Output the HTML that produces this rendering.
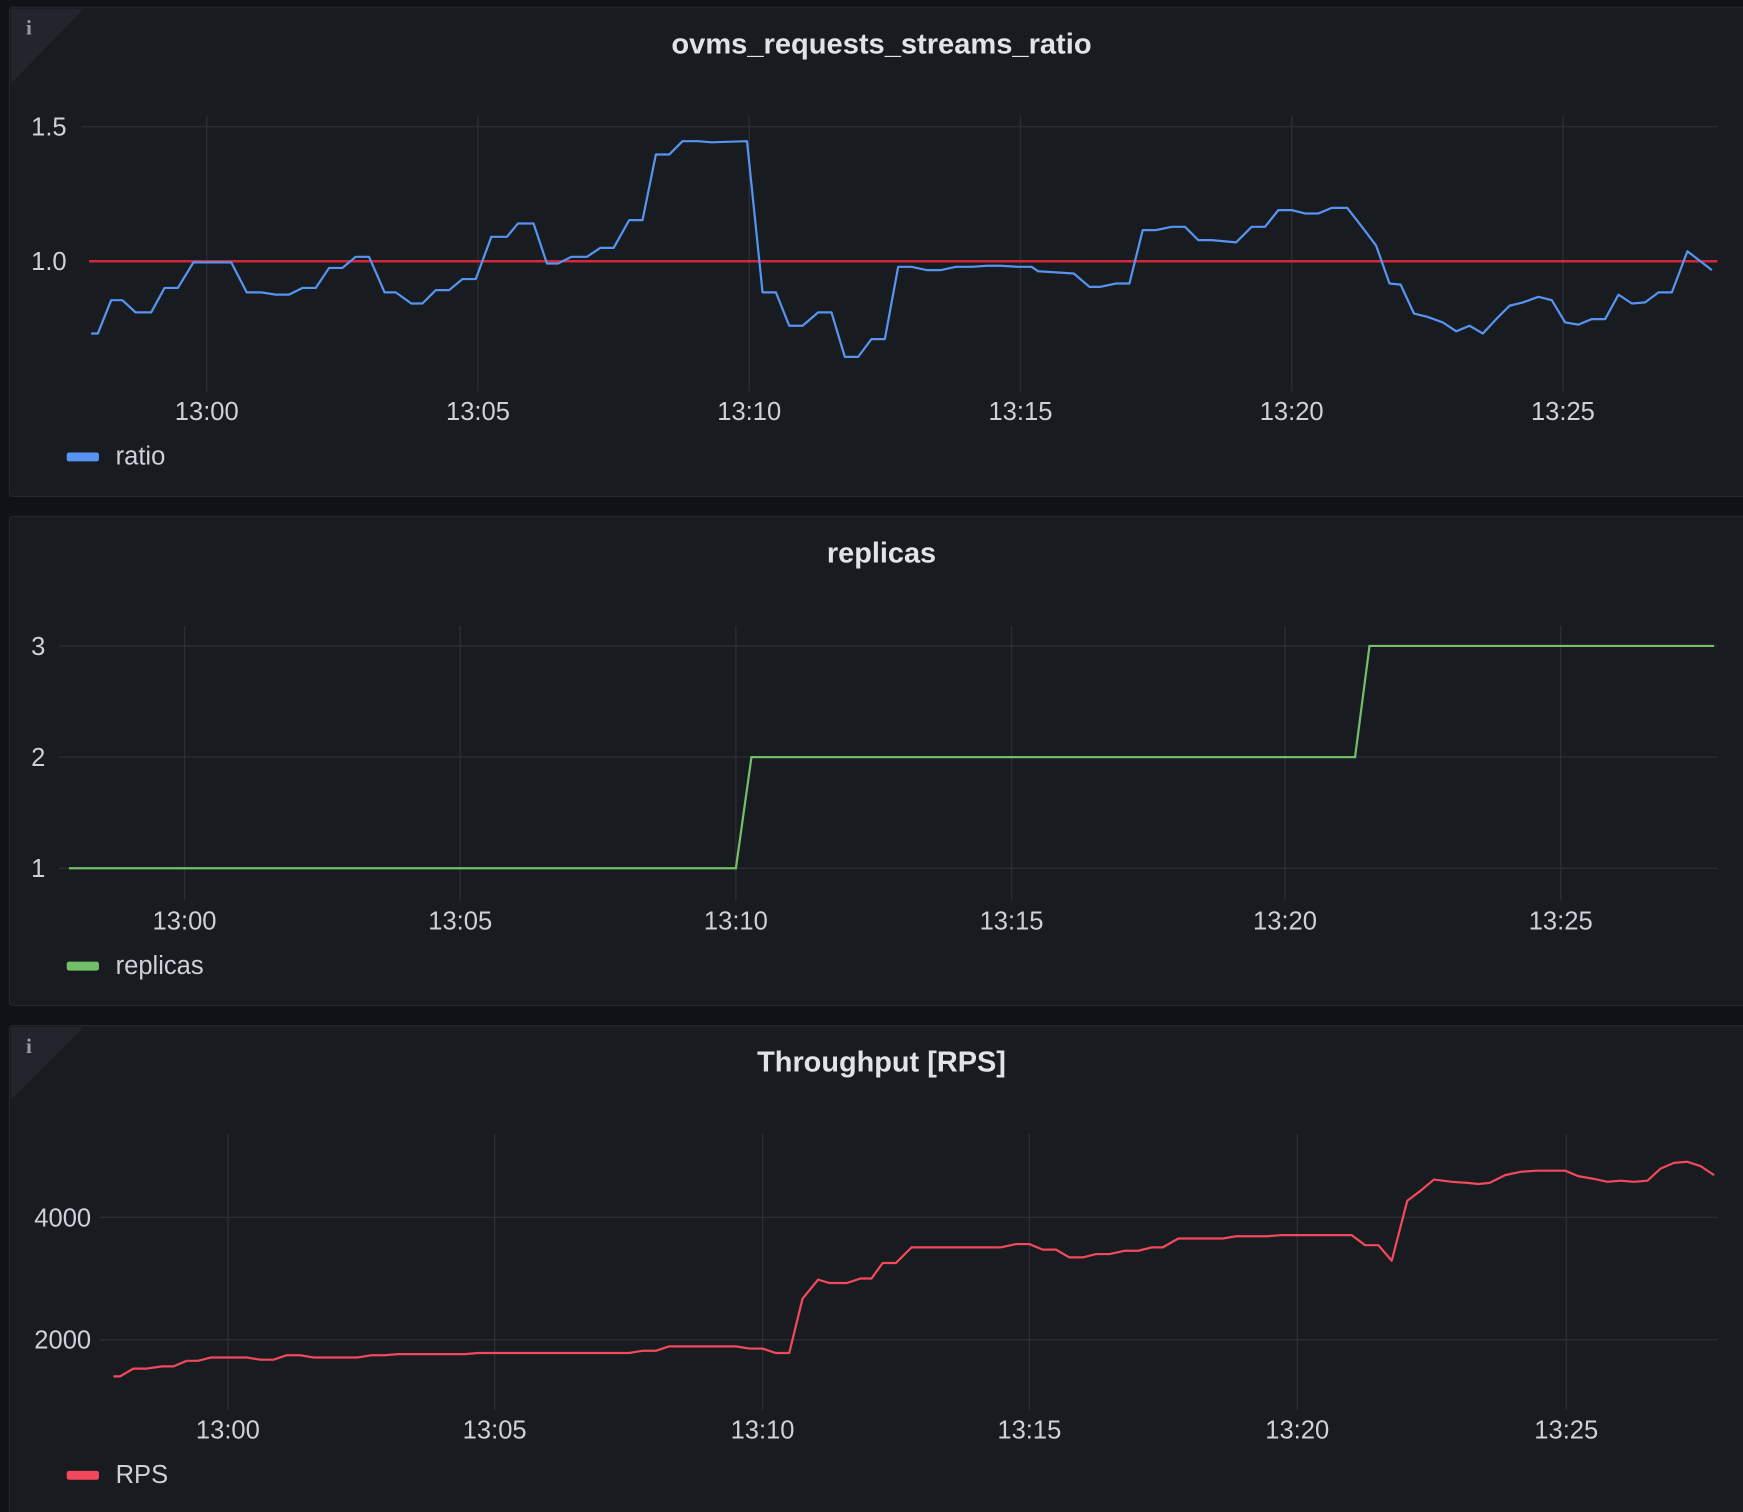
<!DOCTYPE html>
<html><head><meta charset="utf-8"><style>
html,body{margin:0;padding:0;background:#111217;width:1743px;height:1512px;overflow:hidden}
svg{display:block}
text{font-family:"Liberation Sans",sans-serif}
.t{fill:#e2e3ea;font-size:26px;font-weight:600;text-anchor:middle}
.l{fill:#cfd0da;font-size:23px}
.x{fill:#cfd0da;font-size:23px;text-anchor:middle}
.g{stroke:#2c2e33;stroke-width:1.2}
</style></head><body>
<svg width="1743" height="1512" viewBox="0 0 1568 1360" preserveAspectRatio="none">
<rect width="1568" height="1360" fill="#111217"/>
<rect x="8.5" y="6.5" width="1570" height="440" rx="3" fill="#181b1f" stroke="#25272c"/>
<rect x="8.5" y="464.5" width="1570" height="440" rx="3" fill="#181b1f" stroke="#25272c"/>
<rect x="8.5" y="922.5" width="1570" height="450" rx="3" fill="#181b1f" stroke="#25272c"/>
<path d="M10 8 L75 8 L10 75 Z" fill="#22252b"/>
<text x="26" y="31" fill="#9a9ba3" font-size="19" font-weight="bold" text-anchor="middle" style="font-family:'Liberation Serif',serif">i</text>
<path d="M10 924 L75 924 L10 989 Z" fill="#22252b"/>
<text x="26" y="947" fill="#9a9ba3" font-size="19" font-weight="bold" text-anchor="middle" style="font-family:'Liberation Serif',serif">i</text>

<text class="t" x="793" y="48" textLength="378" lengthAdjust="spacingAndGlyphs">ovms_requests_streams_ratio</text>
<g class="g">
<line x1="73" y1="114" x2="1545" y2="114"/>
<line x1="186" y1="104" x2="186" y2="352"/><line x1="430" y1="104" x2="430" y2="352"/><line x1="674" y1="104" x2="674" y2="352"/>
<line x1="918" y1="104" x2="918" y2="352"/><line x1="1162" y1="104" x2="1162" y2="352"/><line x1="1406" y1="104" x2="1406" y2="352"/>
</g>
<text class="l" x="28" y="122">1.5</text><text class="l" x="28" y="243">1.0</text>
<line x1="80" y1="235" x2="1545" y2="235" stroke="#d0283a" stroke-width="2.2"/>
<polyline fill="none" stroke="#5794f2" stroke-width="2" stroke-linejoin="round" points="82,300 88,300 100,270 110,270 122,281 136,281 148,259 160,259 174,236 208,236 222,263 235,263 248,265 260,265 272,259 284,259 296,241 308,241 320,231 332,231 346,263 356,263 370,273 380,273 392,261 404,261 416,251 428,251 442,213 456,213 466,201 480,201 492,237 502,237 514,231 528,231 540,223 552,223 566,198 578,198 590,139 602,139 614,127 628,127 640,128 672,127 686,263 698,263 710,293 722,293 736,281 748,281 760,321 772,321 784,305 796,305 808,240 820,240 834,243 846,243 860,240 874,240 888,239 900,239 916,240 928,240 934,244 966,246 980,258 990,258 1004,255 1016,255 1028,207 1040,207 1054,204 1066,204 1078,216 1090,216 1112,218 1126,204 1138,204 1150,189 1162,189 1174,192 1186,192 1198,187 1212,187 1226,205 1238,221 1250,255 1260,256 1272,282 1284,285 1298,290 1310,298 1322,293 1334,300 1346,287 1358,275 1370,272 1384,267 1396,270 1408,290 1420,292 1432,287 1444,287 1456,265 1468,273 1480,272 1492,263 1504,263 1518,226 1540,243"/>
<text class="x" x="186" y="378">13:00</text><text class="x" x="430" y="378">13:05</text><text class="x" x="674" y="378">13:10</text>
<text class="x" x="918" y="378">13:15</text><text class="x" x="1162" y="378">13:20</text><text class="x" x="1406" y="378">13:25</text>
<rect x="60" y="407" width="29" height="8" rx="2" fill="#5794f2"/>
<text class="l" x="104" y="418">ratio</text>

<text class="t" x="793" y="506">replicas</text>
<g class="g">
<line x1="53" y1="581" x2="1545" y2="581"/><line x1="53" y1="681" x2="1545" y2="681"/><line x1="53" y1="781" x2="1545" y2="781"/>
<line x1="166" y1="563" x2="166" y2="810"/><line x1="414" y1="563" x2="414" y2="810"/><line x1="662" y1="563" x2="662" y2="810"/>
<line x1="910" y1="563" x2="910" y2="810"/><line x1="1156" y1="563" x2="1156" y2="810"/><line x1="1404" y1="563" x2="1404" y2="810"/>
</g>
<text class="l" x="28" y="589">3</text><text class="l" x="28" y="689">2</text><text class="l" x="28" y="789">1</text>
<polyline fill="none" stroke="#73bf69" stroke-width="2" points="62,781 662,781 676,681 1219,681 1232,581 1542,581"/>
<text class="x" x="166" y="836">13:00</text><text class="x" x="414" y="836">13:05</text><text class="x" x="662" y="836">13:10</text>
<text class="x" x="910" y="836">13:15</text><text class="x" x="1156" y="836">13:20</text><text class="x" x="1404" y="836">13:25</text>
<rect x="60" y="865" width="29" height="8" rx="2" fill="#73bf69"/>
<text class="l" x="104" y="876">replicas</text>

<text class="t" x="793" y="964">Throughput [RPS]</text>
<g class="g">
<line x1="90" y1="1095" x2="1545" y2="1095"/><line x1="90" y1="1205" x2="1545" y2="1205"/>
<line x1="205" y1="1020" x2="205" y2="1268"/><line x1="445" y1="1020" x2="445" y2="1268"/><line x1="686" y1="1020" x2="686" y2="1268"/>
<line x1="926" y1="1020" x2="926" y2="1268"/><line x1="1167" y1="1020" x2="1167" y2="1268"/><line x1="1409" y1="1020" x2="1409" y2="1268"/>
</g>
<text class="l" x="82" y="1103" text-anchor="end">4000</text><text class="l" x="82" y="1213" text-anchor="end">2000</text>
<polyline fill="none" stroke="#f2495c" stroke-width="2" stroke-linejoin="round" points="102,1238 108,1238 120,1231 132,1231 146,1229 156,1229 168,1224 178,1224 190,1221 222,1221 234,1223 246,1223 258,1219 270,1219 282,1221 322,1221 334,1219 346,1219 358,1218 418,1218 430,1217 566,1217 578,1215 590,1215 602,1211 662,1211 674,1213 686,1213 698,1217 710,1217 722,1168 736,1151 746,1154 762,1154 774,1150 784,1150 794,1136 806,1136 820,1122 900,1122 914,1119 926,1119 938,1124 950,1124 962,1131 974,1131 986,1128 998,1128 1012,1125 1024,1125 1036,1122 1046,1122 1060,1114 1100,1114 1112,1112 1140,1112 1152,1111 1216,1111 1228,1120 1240,1120 1252,1134 1266,1080 1278,1071 1290,1061 1306,1063 1320,1064 1330,1065 1340,1064 1354,1057 1368,1054 1382,1053 1408,1053 1420,1058 1432,1060 1446,1063 1458,1062 1470,1063 1482,1062 1494,1051 1506,1046 1518,1045 1530,1049 1542,1057"/>
<text class="x" x="205" y="1294">13:00</text><text class="x" x="445" y="1294">13:05</text><text class="x" x="686" y="1294">13:10</text>
<text class="x" x="926" y="1294">13:15</text><text class="x" x="1167" y="1294">13:20</text><text class="x" x="1409" y="1294">13:25</text>
<rect x="60" y="1323" width="29" height="8" rx="2" fill="#f2495c"/>
<text class="l" x="104" y="1334">RPS</text>
</svg>
</body></html>
